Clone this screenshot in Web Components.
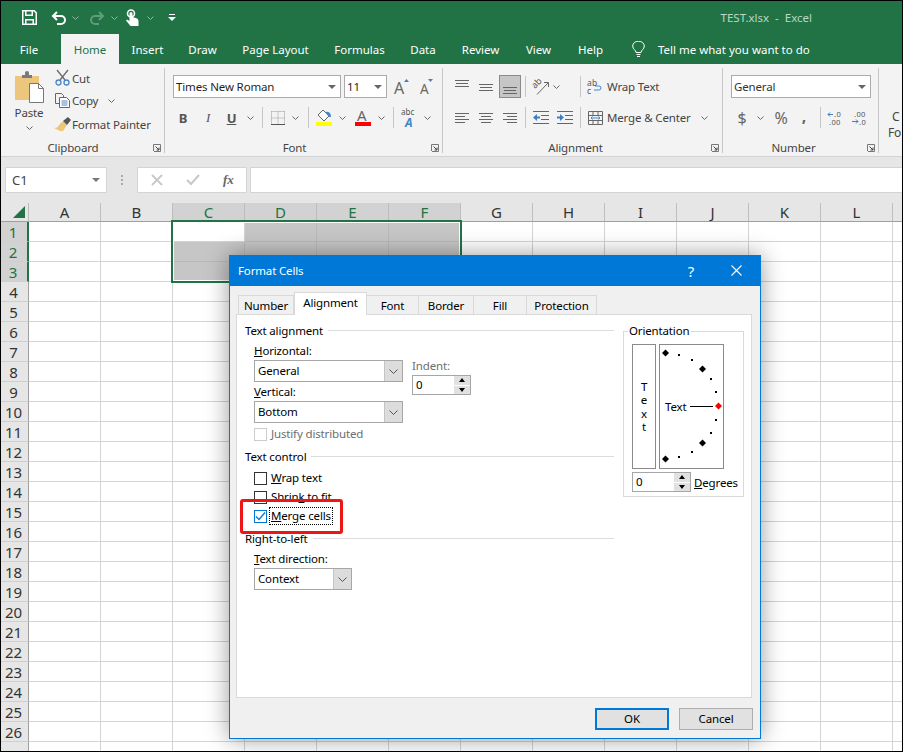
<!DOCTYPE html>
<html>
<head>
<meta charset="utf-8">
<title>TEST.xlsx - Excel</title>
<style>
  html, body { margin: 0; padding: 0; background: #000; overflow: hidden; }
  body { font: 11.5px "Noto Sans", "Liberation Sans", sans-serif; color: #444; }
</style>
</head>
<body>
<excel-app>
  <title-bar></title-bar>
  <ribbon-tabs></ribbon-tabs>
  <home-ribbon></home-ribbon>
  <formula-bar></formula-bar>
  <sheet-grid></sheet-grid>
  <format-dialog slot="over"></format-dialog>
</excel-app>

<script>
const chev = (c = "#666") => `<svg width="7" height="4" viewBox="0 0 7 4"><path d="M.5.5l3 3 3-3" fill="none" stroke="${c}"/></svg>`;
const launcher = `<svg width="8" height="8" viewBox="0 0 8 8"><path d="M.5 7V.5H7.5V7.5H1" fill="none" stroke="#777"/><path d="M2.5 2.5L6 6M6 3.5V6H3.5" fill="none" stroke="#444"/></svg>`;
const bars = (rows) => `<svg width="14" height="${rows[rows.length - 1][1] + 1}">${rows.map(r => `<rect x="${r[0]}" y="${r[1]}" width="${r[2]}" height="1" fill="#666"/>`).join("")}</svg>`;

class ExcelApp extends HTMLElement {
  constructor() {
    super();
    this.attachShadow({ mode: "open" }).innerHTML = `
    <style>
      :host { display: flex; flex-direction: column; position: relative; box-sizing: border-box;
        width: 903px; height: 752px; border: 1px solid #000; overflow: hidden; background: #fff; }
    </style>
    <slot></slot><slot name="over"></slot>`;
  }
}

class TitleBar extends HTMLElement {
  constructor() {
    super();
    const dim = "#8fbba3";
    this.attachShadow({ mode: "open" }).innerHTML = `
    <style>
      :host { display: flex; align-items: center; height: 33px; background: #217346; color: #b9d6c6; }
      svg { flex: none; }
      .title { margin-left: auto; margin-right: 90px; }
    </style>
    <svg style="margin-left:21px" width="15" height="15" viewBox="0 0 15 15" fill="#fff">
      <path fill-rule="evenodd" d="M0 0h12.5L15 2.5V15H0zM1.5 1.5v12H3V9h9v4.5h1.5V3.2L11.8 1.5H11V6H3V1.5zM4.5 1.5V4.5H9.5V1.5zM4.5 10.5v3h6v-3z"/>
    </svg>
    <svg style="margin-left:14px" width="15" height="14" viewBox="0 0 15 14" fill="none" stroke="#fff" stroke-width="2">
      <path d="M6 1L2 5l4 4M2 5h8a3.8 3.8 0 0 1 0 8H6"/>
    </svg>
    <span style="margin-left:6px;display:flex">${chev(dim)}</span>
    <svg style="margin-left:11px" width="15" height="14" viewBox="0 0 15 14" fill="none" stroke="#5f9c7d" stroke-width="2">
      <path d="M9 1l4 4-4 4M13 5H5a3.8 3.8 0 0 0 0 8h4"/>
    </svg>
    <span style="margin-left:6px;display:flex">${chev(dim)}</span>
    <svg style="margin-left:8px" width="13" height="17" viewBox="0 0 13 17">
      <circle cx="5" cy="4.5" r="3.5" fill="none" stroke="#fff" stroke-width="1.6"/>
      <path d="M3.5 4.5a1.5 1.5 0 0 1 3 0V8l4 1.2q2 .6 2 2.8V17H4.5L0 11.5l1-1 2.5 1.5z" fill="#fff"/>
    </svg>
    <span style="margin-left:8px;display:flex">${chev(dim)}</span>
    <svg style="margin-left:14px" width="8" height="7" viewBox="0 0 8 7" fill="#fff">
      <rect x="1" y="0" width="6" height="1"/><path d="M0 3h8L4 7z"/>
    </svg>
    <span class="title">TEST.xlsx &nbsp;-&nbsp; Excel</span>`;
  }
}

class RibbonTabs extends HTMLElement {
  constructor() {
    super();
    const tabs = [["File", 60], ["Home", 58], ["Insert", 57], ["Draw", 53], ["Page Layout", 93],
      ["Formulas", 75], ["Data", 52], ["Review", 63], ["View", 53], ["Help", 51]];
    this.attachShadow({ mode: "open" }).innerHTML = `
    <style>
      :host { display: flex; align-items: stretch; height: 30px; background: #217346; color: #fff; }
      .tab { display: flex; align-items: center; justify-content: center; box-sizing: border-box; }
      .tab.file { padding-right: 4px; }
      .tab.on { background: #f3f3f3; color: #217346; }
      .tell { display: flex; align-items: center; margin-left: 16px; gap: 13px; }
    </style>
    ${tabs.map(t => `<div class="tab ${t[0] === "Home" ? "on" : ""} ${t[0] === "File" ? "file" : ""}" style="width:${t[1]}px">${t[0]}</div>`).join("")}
    <div class="tell">
      <svg width="13" height="17" viewBox="0 0 13 17" fill="none" stroke="#fff">
        <path d="M4 11.5C4 9 .7 8.5.7 5a5.8 4.8 0 0 1 11.6 0c0 3.5-3.3 4-3.3 6.5zM4.5 13.5h4M5 15.5h3"/>
      </svg>
      <span>Tell me what you want to do</span>
    </div>`;
  }
}

class RibbonGroup extends HTMLElement {
  constructor() {
    super();
    this.attachShadow({ mode: "open" }).innerHTML = `
    <style>
      :host { display: flex; flex-direction: column; position: relative; box-sizing: border-box; flex: none;
        height: 85px; margin-top: 4px; border-right: 1px solid #c6c6c6; color: #444; }
      .body { flex: 1; min-height: 0; }
      .label { height: 14px; line-height: 14px; text-align: center; margin-bottom: -2px; padding-right: var(--label-pad, 14px); }
      .launch { position: absolute; right: 3px; bottom: 1px; display: flex; }
    </style>
    <div class="body"><slot></slot></div>
    <div class="label"></div>
    <div class="launch">${launcher}</div>`;
    this.shadowRoot.querySelector(".label").textContent = this.getAttribute("label");
  }
}

class HomeRibbon extends HTMLElement {
  constructor() {
    super();
    const sep = `<i class="sep"></i>`;
    const alignTop = bars([[0, 0, 14], [1, 3, 12], [0, 6, 14]]);
    this.attachShadow({ mode: "open" }).innerHTML = `
    <style>
      :host { display: flex; height: 93px; box-sizing: border-box; background: #f3f3f3; border-bottom: 1px solid #d2d2d2; letter-spacing: -.15px; }
      svg { overflow: visible; }
      .clip { display: grid; grid-template-columns: 52px 1fr; height: 71px; }
      .paste { display: flex; flex-direction: column; align-items: center; padding: 3px 0 0 4px; }
      .paste span { margin-top: 2px; line-height: 16px; }
      .paste .c { display: flex; margin-top: 5px; }
      .small { display: flex; flex-direction: column; padding-top: 1px; }
      .small div { display: grid; grid-template-columns: 19px auto auto; align-items: center; height: 23.5px; justify-content: start; }
      .small svg { justify-self: center; margin-left: -1px; }
      .box { display: flex; align-items: center; justify-content: space-between; box-sizing: border-box;
        height: 23px; background: #fff; border: 1px solid #ababab; padding: 0 4px 0 2px; flex: none; color: #333; }
      .tri { width: 0; height: 0; border: 4px solid transparent; border-top: 4px solid #666; border-bottom: 0; }
      .r1 { display: flex; align-items: center; margin: 7px 0 0 8px; height: 23px; }
      .r2 { display: grid; align-items: center; justify-items: center; height: 20px; margin: 9px 0 0 8px; }
      .r2 > svg, .r2 > b, .r2 > em, .r2 > span { display: block; }
      .sep { display: block; width: 1px; height: 21px; background: #c6c6c6; }
      .fonts { grid-template-columns: 20px 30px 17px 20px 4px 27px 8px 18px 14px 22px 20px 16px 8px 24px 12px; }
      .aligns { display: grid; grid-template-columns: 22px 26px 22px 8px 24px 24px 6px 24px auto; align-items: center; justify-items: center; margin-left: 8px; }
      .aligns.top { margin-top: 7px; height: 23px; }
      .aligns.bot { margin-top: 9px; height: 20px; }
      .aligns .t { justify-self: start; white-space: nowrap; display: flex; align-items: center; }
      .sel { box-sizing: border-box; width: 22px; height: 23px; background: #c6c6c6; border: 1px solid #8a8a8a; display: flex; justify-content: center; align-items: flex-end; padding-bottom: 3px; }
      .nums { grid-template-columns: 22px 14px 28px 18px 14px 16px 32px; color: #666; }
      .big { font-size: 16px; color: #666; line-height: 20px; }
      .cond { flex: none; padding: 41px 0 0 9px; line-height: 16px; color: #444; margin-top: 4px; overflow: hidden; font-size: 12px; }
      svg text { font-family: "Noto Sans", sans-serif; letter-spacing: 0; }
    </style>

    <ribbon-group label="Clipboard" style="width:164px;--label-pad:19px">
      <div class="clip">
        <div class="paste">
          <svg width="29" height="32" viewBox="0 0 29 32">
            <path d="M0 5h24v24H0z" fill="#ecc67c"/>
            <path d="M7 4h3V1.5a2 1.5 0 0 1 4 0V4h3v3H7z" fill="#7a7a7a"/>
            <path d="M14.5 12.5h9l5 5v14h-14z" fill="#fff" stroke="#777"/>
            <path d="M23.5 12.5v5h5" fill="none" stroke="#777"/>
          </svg>
          <span>Paste</span>
          <span class="c">${chev()}</span>
        </div>
        <div class="small">
          <div style="height:22px;margin-top:-2px">
            <svg width="15" height="16" viewBox="0 0 15 16" fill="none">
              <path d="M2 0l8 10M13 0L5 10" stroke="#6a6a6a" stroke-width="1.3"/>
              <circle cx="3.5" cy="12.5" r="2.5" stroke="#4a86c5" stroke-width="1.3"/>
              <circle cx="11.5" cy="12.5" r="2.5" stroke="#4a86c5" stroke-width="1.3"/>
            </svg>
            <span>Cut</span>
          </div>
          <div>
            <svg width="15" height="15" viewBox="0 0 15 15" fill="none" stroke="#666">
              <path d="M.5.5h6l2 2v2M.5.5v10h4"/>
              <path d="M4.5 4.5h7l3 3v7h-10z" fill="#fff"/>
              <path d="M6.5 8h6M6.5 10h6M6.5 12h6" stroke="#4a86c5"/>
            </svg>
            <span>Copy</span>
            <span style="display:flex;margin-left:11px">${chev()}</span>
          </div>
          <div>
            <svg width="17" height="15" viewBox="0 0 17 15">
              <path d="M9 4l4 4-4 6H6L0 11q4 0 5-3z" fill="#ecc67c"/>
              <path d="M9 4l5-4 3 3-4 5z" fill="#555"/>
            </svg>
            <span>Format Painter</span>
          </div>
        </div>
      </div>
    </ribbon-group>

    <ribbon-group label="Font" style="width:278px;--label-pad:18px">
      <div class="r1">
        <div class="box" style="width:168px;color:#1f1f1f"><span>Times New Roman</span><i class="tri"></i></div>
        <div class="box" style="width:43px;margin-left:3px;color:#1f1f1f"><span>11</span><i class="tri"></i></div>
        <svg style="margin-left:8px" width="14" height="16" viewBox="0 0 14 16">
          <text x="-1" y="15" font-size="16" fill="#666">A</text><path d="M9 3l2.5-3L14 3z" fill="#4a7ebb"/>
        </svg>
        <svg style="margin-left:11px" width="14" height="16" viewBox="0 0 14 16">
          <text x="0" y="15" font-size="13.5" fill="#666">A</text><path d="M8 0h5L10.5 3z" fill="#4a7ebb"/>
        </svg>
      </div>
      <div class="r2 fonts">
        <b style="font-size:13px;color:#555">B</b>
        <em style="font:italic 13px 'Liberation Serif',serif;color:#555">I</em>
        <span style="font-size:13px;font-weight:700;color:#555;text-decoration:underline">U</span>
        ${chev()}
        ${sep}
        <svg width="14" height="14" viewBox="0 0 14 14" fill="none" stroke="#999" stroke-dasharray="1 1">
          <path d="M.5.5h13M.5 7h13M.5.5v13M7 .5v13M13.5 .5v13"/><path d="M0 13.5h14" stroke="#555" stroke-dasharray="none"/>
        </svg>
        ${chev()}
        ${sep}
        <svg width="17" height="18" viewBox="0 0 17 18">
          <path d="M7 1l6 6-5 5-6-6z" fill="#fff" stroke="#666"/><path d="M9 3q6-1 6 5l-2 0z" fill="#4a86c5"/>
          <rect y="13" width="16" height="4" fill="#ffff00"/>
        </svg>
        ${chev()}
        <svg width="16" height="18" viewBox="0 0 16 18">
          <text x="2" y="12" font-size="15" fill="#666">A</text>
          <rect y="13" width="16" height="4" fill="#f00"/>
        </svg>
        ${chev()}
        ${sep}
        <svg width="16" height="18" viewBox="0 0 16 18">
          <text x="0" y="6" font-size="8" fill="#555">abc</text>
          <text x="4" y="17.5" font-size="12" font-weight="700" font-style="italic" fill="#3f87c8">A</text>
        </svg>
        ${chev()}
      </div>
    </ribbon-group>

    <ribbon-group label="Alignment" style="width:280px">
      <div class="aligns top">
        <span style="display:flex;margin-top:-6px">${alignTop}</span>
        <span style="display:flex;margin-top:1px">${alignTop}</span>
        <div class="sel">${alignTop}</div>
        ${sep}
        <svg width="17" height="16" viewBox="0 0 17 16">
          <text transform="translate(2 10) rotate(-45)" font-size="9" fill="#555">ab</text>
          <path d="M4 15.5L15 4M11 3.5h4.500V8" fill="none" stroke="#666"/>
        </svg>
        <span style="justify-self:start;display:flex">${chev()}</span>
        ${sep}
        <svg width="16" height="15" viewBox="0 0 16 15">
          <text x="0 5 0" y="6.5 6.5 14.5" font-size="8.5" fill="#555">abc</text>
          <path d="M7 11h5a2 2 0 0 0 0-4H8" fill="none" stroke="#3f87c8"/>
        </svg>
        <span class="t">Wrap Text</span>
      </div>
      <div class="aligns bot">
        ${bars([[0, 0, 14], [0, 3, 10], [0, 6, 14], [0, 9, 10]])}
        ${bars([[0, 0, 14], [2, 3, 10], [0, 6, 14], [2, 9, 10]])}
        ${bars([[0, 0, 14], [4, 3, 10], [0, 6, 14], [4, 9, 10]])}
        ${sep}
        <svg width="16" height="13" viewBox="0 0 16 13">
          <path d="M0 .5h16M8 4.5h8M8 8.5h8M0 12.5h16" stroke="#666"/><path d="M0 6.5L4 3v2.5h3v2H4V10z" fill="#3f7fc1"/>
        </svg>
        <svg width="16" height="13" viewBox="0 0 16 13">
          <path d="M0 .5h16M8 4.5h8M8 8.5h8M0 12.5h16" stroke="#666"/><path d="M7 6.5L3 3v2.5H0v2h3V10z" fill="#3f7fc1"/>
        </svg>
        ${sep}
        <svg width="15" height="14" viewBox="0 0 15 14" fill="none" stroke="#666">
          <path d="M.5.5h14v13H.5zM.5 4.5h14M.5 9.5h14M5 .5v4M10 .5v4M5 9.5v4M10 9.5v4"/>
          <path d="M3 7h9M4.5 5.5L3 7l1.500 1.500M10.500 5.500L12 7l-1.500 1.500" stroke="#3f87c8"/>
        </svg>
        <span class="t">Merge &amp; Center<span style="display:flex;margin-left:10px">${chev()}</span></span>
      </div>
    </ribbon-group>

    <ribbon-group label="Number" style="width:156px">
      <div class="r1"><div class="box" style="width:140px;color:#333"><span>General</span><i class="tri"></i></div></div>
      <div class="r2 nums">
        <span class="big">$</span>
        ${chev()}
        <span class="big">%</span>
        <span class="big" style="font-weight:700;margin-top:-3px">,</span>
        ${sep}
        <svg width="15" height="14" viewBox="0 0 15 14">
          <text x="6 8.5 1 3.5 8" y="6 6 13.5 13.5 13.5" font-size="7.5" fill="#555">.0.00</text>
          <path d="M5 3.5H0M2 1.5L0 3.5l2 2" fill="none" stroke="#3f7fc1"/>
        </svg>
        <svg width="15" height="14" viewBox="0 0 15 14">
          <text x="2 4.5 9 7 9.5" y="6 6 6 13.5 13.5" font-size="7.5" fill="#555">.00.0</text>
          <path d="M0 10.5h6M4 8.5l2 2-2 2" fill="none" stroke="#3f7fc1"/>
        </svg>
      </div>
    </ribbon-group>
    <div class="cond"><span style="margin-left:4px">C</span><br>Fo</div>`;
  }
}

class FormulaBar extends HTMLElement {
  constructor() {
    super();
    this.attachShadow({ mode: "open" }).innerHTML = `
    <style>
      :host { display: flex; align-items: center; height: 46px; flex: none; background: #e6e6e6; color: #444; }
      .b { box-sizing: border-box; height: 26px; background: #fff; border: 1px solid #d4d4d4; display: flex; align-items: center; }
      .name { width: 102px; margin-left: 4px; padding: 0 6px; justify-content: space-between; font-size: 13px; }
      .tri { width: 0; height: 0; border: 4px solid transparent; border-top: 4px solid #777; border-bottom: 0; }
      .dots { margin: 0 14px 0 14px; width: 2px; height: 10px; background: repeating-linear-gradient(#aaa 0 2px, transparent 2px 4px); }
      .fx { width: 110px; }
      .input { flex: 1; margin-left: 3px; margin-right: -2px; }
    </style>
    <div class="b name"><span>C1</span><i class="tri"></i></div>
    <i class="dots"></i>
    <div class="b fx">
      <svg style="margin-left:13px" width="12" height="12" viewBox="0 0 12 12"><path d="M1 1l10 10M11 1L1 11" stroke="#c8c8c8" stroke-width="1.8" fill="none"/></svg>
      <svg style="margin-left:23px" width="14" height="12" viewBox="0 0 14 12"><path d="M1 6l4 4 8-9" stroke="#c8c8c8" stroke-width="2" fill="none"/></svg>
      <span style="margin-left:23px;font:italic 700 13px 'Liberation Serif',serif;color:#666">fx</span>
    </div>
    <div class="b input"></div>`;
  }
}

class SheetGrid extends HTMLElement {
  constructor() {
    super();
    // only A to L and rows 1 to 26 show a heading, the next ones fall off the window
    const cols = "ABCDEFGHIJKL".split("");
    const active = "CDEF";
    let cells = `<div class="corner"><svg width="12" height="12"><path d="M12 0v12H0z" fill="#217346"/></svg></div>`;
    cells += cols.map(c => `<div class="ch ${active.includes(c) ? "on" : ""}">${c}</div>`).join("");
    cells += `<div class="ch"></div>`;
    for (let r = 1; r <= 27; r++) {
      cells += `<div class="rh ${r <= 3 ? "on" : ""}">${r <= 26 ? r : ""}</div>`;
      cells += cols.map(c => {
        const inRange = r <= 3 && active.includes(c) && !(r === 1 && c === "C");
        return `<div class="c ${inRange ? "g" : ""}"></div>`;
      }).join("");
      cells += `<div class="c"></div>`;
    }
    this.attachShadow({ mode: "open" }).innerHTML = `
    <style>
      :host { display: block; position: relative; flex: 1; min-height: 0; overflow: hidden; background: #fff; }
      .grid { display: grid; grid-template-columns: 28px repeat(13, 72px); grid-template-rows: 19px; grid-auto-rows: 20px; font-size: 15px; }
      .corner { background: #e6e6e6; border-right: 1px solid #bbb; border-bottom: 1px solid #9f9f9f; display: flex; justify-content: flex-end; align-items: flex-end; padding: 0 3px 3px 0; box-sizing: border-box; }
      .ch, .rh { display: flex; align-items: center; justify-content: center; box-sizing: border-box; background: #e6e6e6; color: #333; }
      .ch { border-right: 1px solid #bdbdbd; border-bottom: 1px solid #9f9f9f; }
      .rh { border-right: 1px solid #9f9f9f; border-bottom: 1px solid #cfcfcf; padding-right: 2px; }
      .on { background: #d2d2d2; color: #217346; }
      .rh.on { border-right: 2px solid #217346; }
      .c { box-sizing: border-box; border-right: 1px solid #d4d4d4; border-bottom: 1px solid #d4d4d4; }
      .c.g { background: #c6c6c6; border-color: #b9b9b9; }
      .range { position: absolute; left: 170px; top: 17px; width: 291px; height: 63px; box-sizing: border-box; border: 2px solid #217346; box-shadow: inset 0 0 0 1px #fff; }
    </style>
    <div class="grid">${cells}</div>
    <div class="range"></div>`;
  }
}

class DlgSelect extends HTMLElement {
  constructor() {
    super();
    this.attachShadow({ mode: "open" }).innerHTML = `
    <style>
      :host { display: flex; box-sizing: border-box; height: 22px; border: 1px solid #a6a6a6; background: #fff; color: #000; }
      .v { flex: 1; padding-left: 3px; line-height: 20px; }
      .a { width: 17px; background: #dcdcdc; display: flex; align-items: center; justify-content: center; border-left: 1px solid #c4c4c4; }
    </style>
    <div class="v"><slot></slot></div>
    <div class="a"><svg width="9" height="5" viewBox="0 0 9 5"><path d="M.5.5l4 4 4-4" fill="none" stroke="#555"/></svg></div>`;
  }
}

class DlgSpin extends HTMLElement {
  constructor() {
    super();
    this.attachShadow({ mode: "open" }).innerHTML = `
    <style>
      :host { display: flex; box-sizing: border-box; width: 59px; height: 20px; border: 1px solid #a6a6a6; background: #fff; color: #000; flex: none; }
      .v { flex: 1; padding-left: 3px; line-height: 18px; }
      .b { width: 16px; display: flex; flex-direction: column; gap: 1px; background: #fff; }
      .b i { flex: 1; background: #e1e1e1; display: flex; align-items: center; justify-content: center; }
      .up { width: 0; height: 0; border: 3.5px solid transparent; border-bottom: 4px solid #000; border-top: 0; }
      .dn { width: 0; height: 0; border: 3.5px solid transparent; border-top: 4px solid #000; border-bottom: 0; }
    </style>
    <div class="v"><slot></slot></div>
    <div class="b"><i><span class="up"></span></i><i><span class="dn"></span></i></div>`;
  }
}

class DlgCheck extends HTMLElement {
  constructor() {
    super();
    const on = this.hasAttribute("checked");
    this.attachShadow({ mode: "open" }).innerHTML = `
    <style>
      :host { display: flex; align-items: center; height: 14px; gap: 4px; color: #000; }
      :host([disabled]) { color: #6d6d6d; }
      .box { box-sizing: border-box; width: 13px; height: 13px; border: 1px solid #333; background: #fff; display: flex; flex: none; }
      :host([disabled]) .box { border-color: #ccc; }
      :host([checked]) .box { border-color: #0078d7; }
      .txt { line-height: 14px; }
      :host([focused]) .txt { outline: 1px dotted #000; outline-offset: 1px; }
    </style>
    <div class="box">${on ? `<svg width="11" height="11" viewBox="0 0 11 11"><path d="M1 5.5l3 3 6-7" fill="none" stroke="#0078d7" stroke-width="1.3"/></svg>` : ""}</div>
    <span class="txt"><slot></slot></span>`;
  }
}

class DlgSection extends HTMLElement {
  constructor() {
    super();
    this.attachShadow({ mode: "open" }).innerHTML = `
    <style>
      :host { display: flex; align-items: center; gap: 5px; box-sizing: border-box; height: 14px; padding-bottom: 1px; color: #000; }
      i { flex: 1; height: 1px; background: #dcdcdc; margin-top: -1px; }
    </style>
    <slot></slot><i></i>`;
  }
}

class OrientationDial extends HTMLElement {
  constructor() {
    super();
    const diamonds = [[5.5, 8], [42.5, 24], [42.5, 98], [5.5, 114]];
    const dots = [[19, 10], [32, 15], [51, 34], [56, 47], [56, 75], [51, 88], [32, 107], [19, 112]];
    const d = (p, f) => `<path d="M${p[0]} ${p[1] - 3.5}l3.5 3.5-3.5 3.5-3.5-3.5z" fill="${f}"/>`;
    this.attachShadow({ mode: "open" }).innerHTML = `
    <style>
      :host { display: flex; gap: 3px; height: 125px; color: #000; }
      .stack, .arc { box-sizing: border-box; border: 1px solid #8a8a8a; height: 125px; }
      .stack { width: 24px; display: flex; flex-direction: column; align-items: center; justify-content: center; line-height: 13.3px; }
      .arc { width: 65px; }
      svg { display: block; }
    </style>
    <div class="stack"><span>T</span><span>e</span><span>x</span><span>t</span></div>
    <div class="arc">
      <svg width="63" height="123" viewBox="0 0 63 123">
        ${diamonds.map(p => d(p, "#000")).join("")}
        ${dots.map(p => `<rect x="${p[0] - 1}" y="${p[1] - 1}" width="2" height="2" fill="#000"/>`).join("")}
        <text x="5" y="65.5" font-size="11.5" font-family="Noto Sans" fill="#000">Text</text>
        <rect x="30" y="61" width="23" height="1" fill="#000"/>
        ${d([58.5, 61], "#f00")}
      </svg>
    </div>`;
  }
}

class FormatDialog extends HTMLElement {
  constructor() {
    super();
    const tabs = [["Number", 56], ["Alignment", 73], ["Font", 52], ["Border", 55], ["Fill", 53], ["Protection", 70]];
    this.attachShadow({ mode: "open" }).innerHTML = `
    <style>
      :host { position: absolute; left: 228px; top: 254px; width: 532px; height: 484px; box-sizing: border-box;
        display: flex; flex-direction: column; background: #f0f0f0; border: 1px solid #0078d7; color: #000; letter-spacing: -.15px;
        box-shadow: 0 0 22px rgba(0, 0, 0, .4); }
      header { display: flex; align-items: center; box-sizing: border-box; height: 30px; flex: none; background: #0078d7; color: #fff; padding: 0 0 1px 8px; }
      header .q { margin-left: auto; font-size: 15px; margin-right: 37px; }
      header svg { margin-right: 18px; }
      .tabs { display: flex; align-items: flex-end; height: 21px; margin: 7px 0 0 8px; flex: none; position: relative; z-index: 1; }
      .tab { box-sizing: border-box; height: 19px; line-height: 19px; text-align: center; border: 1px solid #d9d9d9; border-left: 0; border-bottom: 0; background: #f0f0f0; }
      .tab:first-child { border-left: 1px solid #d9d9d9; }
      .tab.on { height: 23px; margin-bottom: -1px; line-height: 19px; background: #fff; border-left: 1px solid #d9d9d9; }
      .panel { box-sizing: border-box; height: 384px; margin: 0 8px 0 6px; flex: none; background: #fff; border: 1px solid #d9d9d9;
        display: grid; grid-template-columns: 369px 121px; column-gap: 9px; align-items: start; padding: 9px 0 0 8px; }
      .in { margin-left: 9px; }
      .lb { display: block; height: 14px; line-height: 14px; }
      .row { display: flex; }
      .indent { margin-left: 9px; padding-top: 21px; color: #6d6d6d; }
      fieldset { box-sizing: border-box; width: 121px; height: 173px; margin: 0; padding: 6px 0 0 8px; border: 1px solid #d9d9d9; min-width: 0; }
      legend { padding: 0 2px 0 1px; margin-left: -4px; height: 14px; line-height: 14px; }
      .deg { display: flex; align-items: center; gap: 3px; margin-top: 3px; }
      footer { display: flex; justify-content: flex-end; gap: 10px; padding: 10px 7px 0 0; }
      .btn { box-sizing: border-box; width: 74px; height: 22px; line-height: 20px; text-align: center; background: #e1e1e1; border: 1px solid #adadad; }
      .btn.def { border: 2px solid #0078d7; line-height: 18px; }
      .mark { position: absolute; left: 10px; top: 243px; width: 103px; height: 35px; box-sizing: border-box; border: 3.5px solid #ee1515; border-radius: 3px; }
    </style>
    <header>
      <span>Format Cells</span>
      <span class="q">?</span>
      <svg width="11" height="11" viewBox="0 0 11 11"><path d="M.5.5l10 10M10.5.5l-10 10" stroke="#fff" fill="none" stroke-width="1.1"/></svg>
    </header>
    <div class="tabs">
      ${tabs.map(t => `<div class="tab ${t[0] === "Alignment" ? "on" : ""}" style="width:${t[1]}px">${t[0]}</div>`).join("")}
    </div>
    <div class="panel">
      <div>
        <dlg-section>Text alignment</dlg-section>
        <div class="row in">
          <div style="width:149px">
            <span class="lb" style="margin-top:6px"><u>H</u>orizontal:</span>
            <dlg-select style="margin-top:2px">General</dlg-select>
            <span class="lb" style="margin-top:3px"><u>V</u>ertical:</span>
            <dlg-select style="margin-top:2px">Bottom</dlg-select>
          </div>
          <div class="indent">
            <span class="lb">Indent:</span>
            <dlg-spin style="margin-top:2px">0</dlg-spin>
          </div>
        </div>
        <dlg-check class="in" disabled style="margin-top:4px">Justify distributed</dlg-check>
        <dlg-section style="margin-top:9px">Text control</dlg-section>
        <dlg-check class="in" style="margin-top:7px"><u>W</u>rap text</dlg-check>
        <dlg-check class="in" style="margin-top:5px">Shrin<u>k</u> to fit</dlg-check>
        <dlg-check class="in" checked focused style="margin-top:5px"><u>M</u>erge cells</dlg-check>
        <dlg-section style="margin-top:9px">Right-to-left</dlg-section>
        <div class="in">
          <span class="lb" style="margin-top:6px"><u>T</u>ext direction:</span>
          <dlg-select style="margin-top:2px;width:98px">Context</dlg-select>
        </div>
      </div>
      <fieldset>
        <legend>Orientation</legend>
        <orientation-dial></orientation-dial>
        <div class="deg"><dlg-spin>0</dlg-spin><span><u>D</u>egrees</span></div>
      </fieldset>
    </div>
    <footer>
      <div class="btn def">OK</div>
      <div class="btn">Cancel</div>
    </footer>
    <div class="mark"></div>`;
  }
}

customElements.define("excel-app", ExcelApp);
customElements.define("title-bar", TitleBar);
customElements.define("ribbon-tabs", RibbonTabs);
customElements.define("ribbon-group", RibbonGroup);
customElements.define("home-ribbon", HomeRibbon);
customElements.define("formula-bar", FormulaBar);
customElements.define("sheet-grid", SheetGrid);
customElements.define("dlg-select", DlgSelect);
customElements.define("dlg-spin", DlgSpin);
customElements.define("dlg-check", DlgCheck);
customElements.define("dlg-section", DlgSection);
customElements.define("orientation-dial", OrientationDial);
customElements.define("format-dialog", FormatDialog);
</script>
</body>
</html>
